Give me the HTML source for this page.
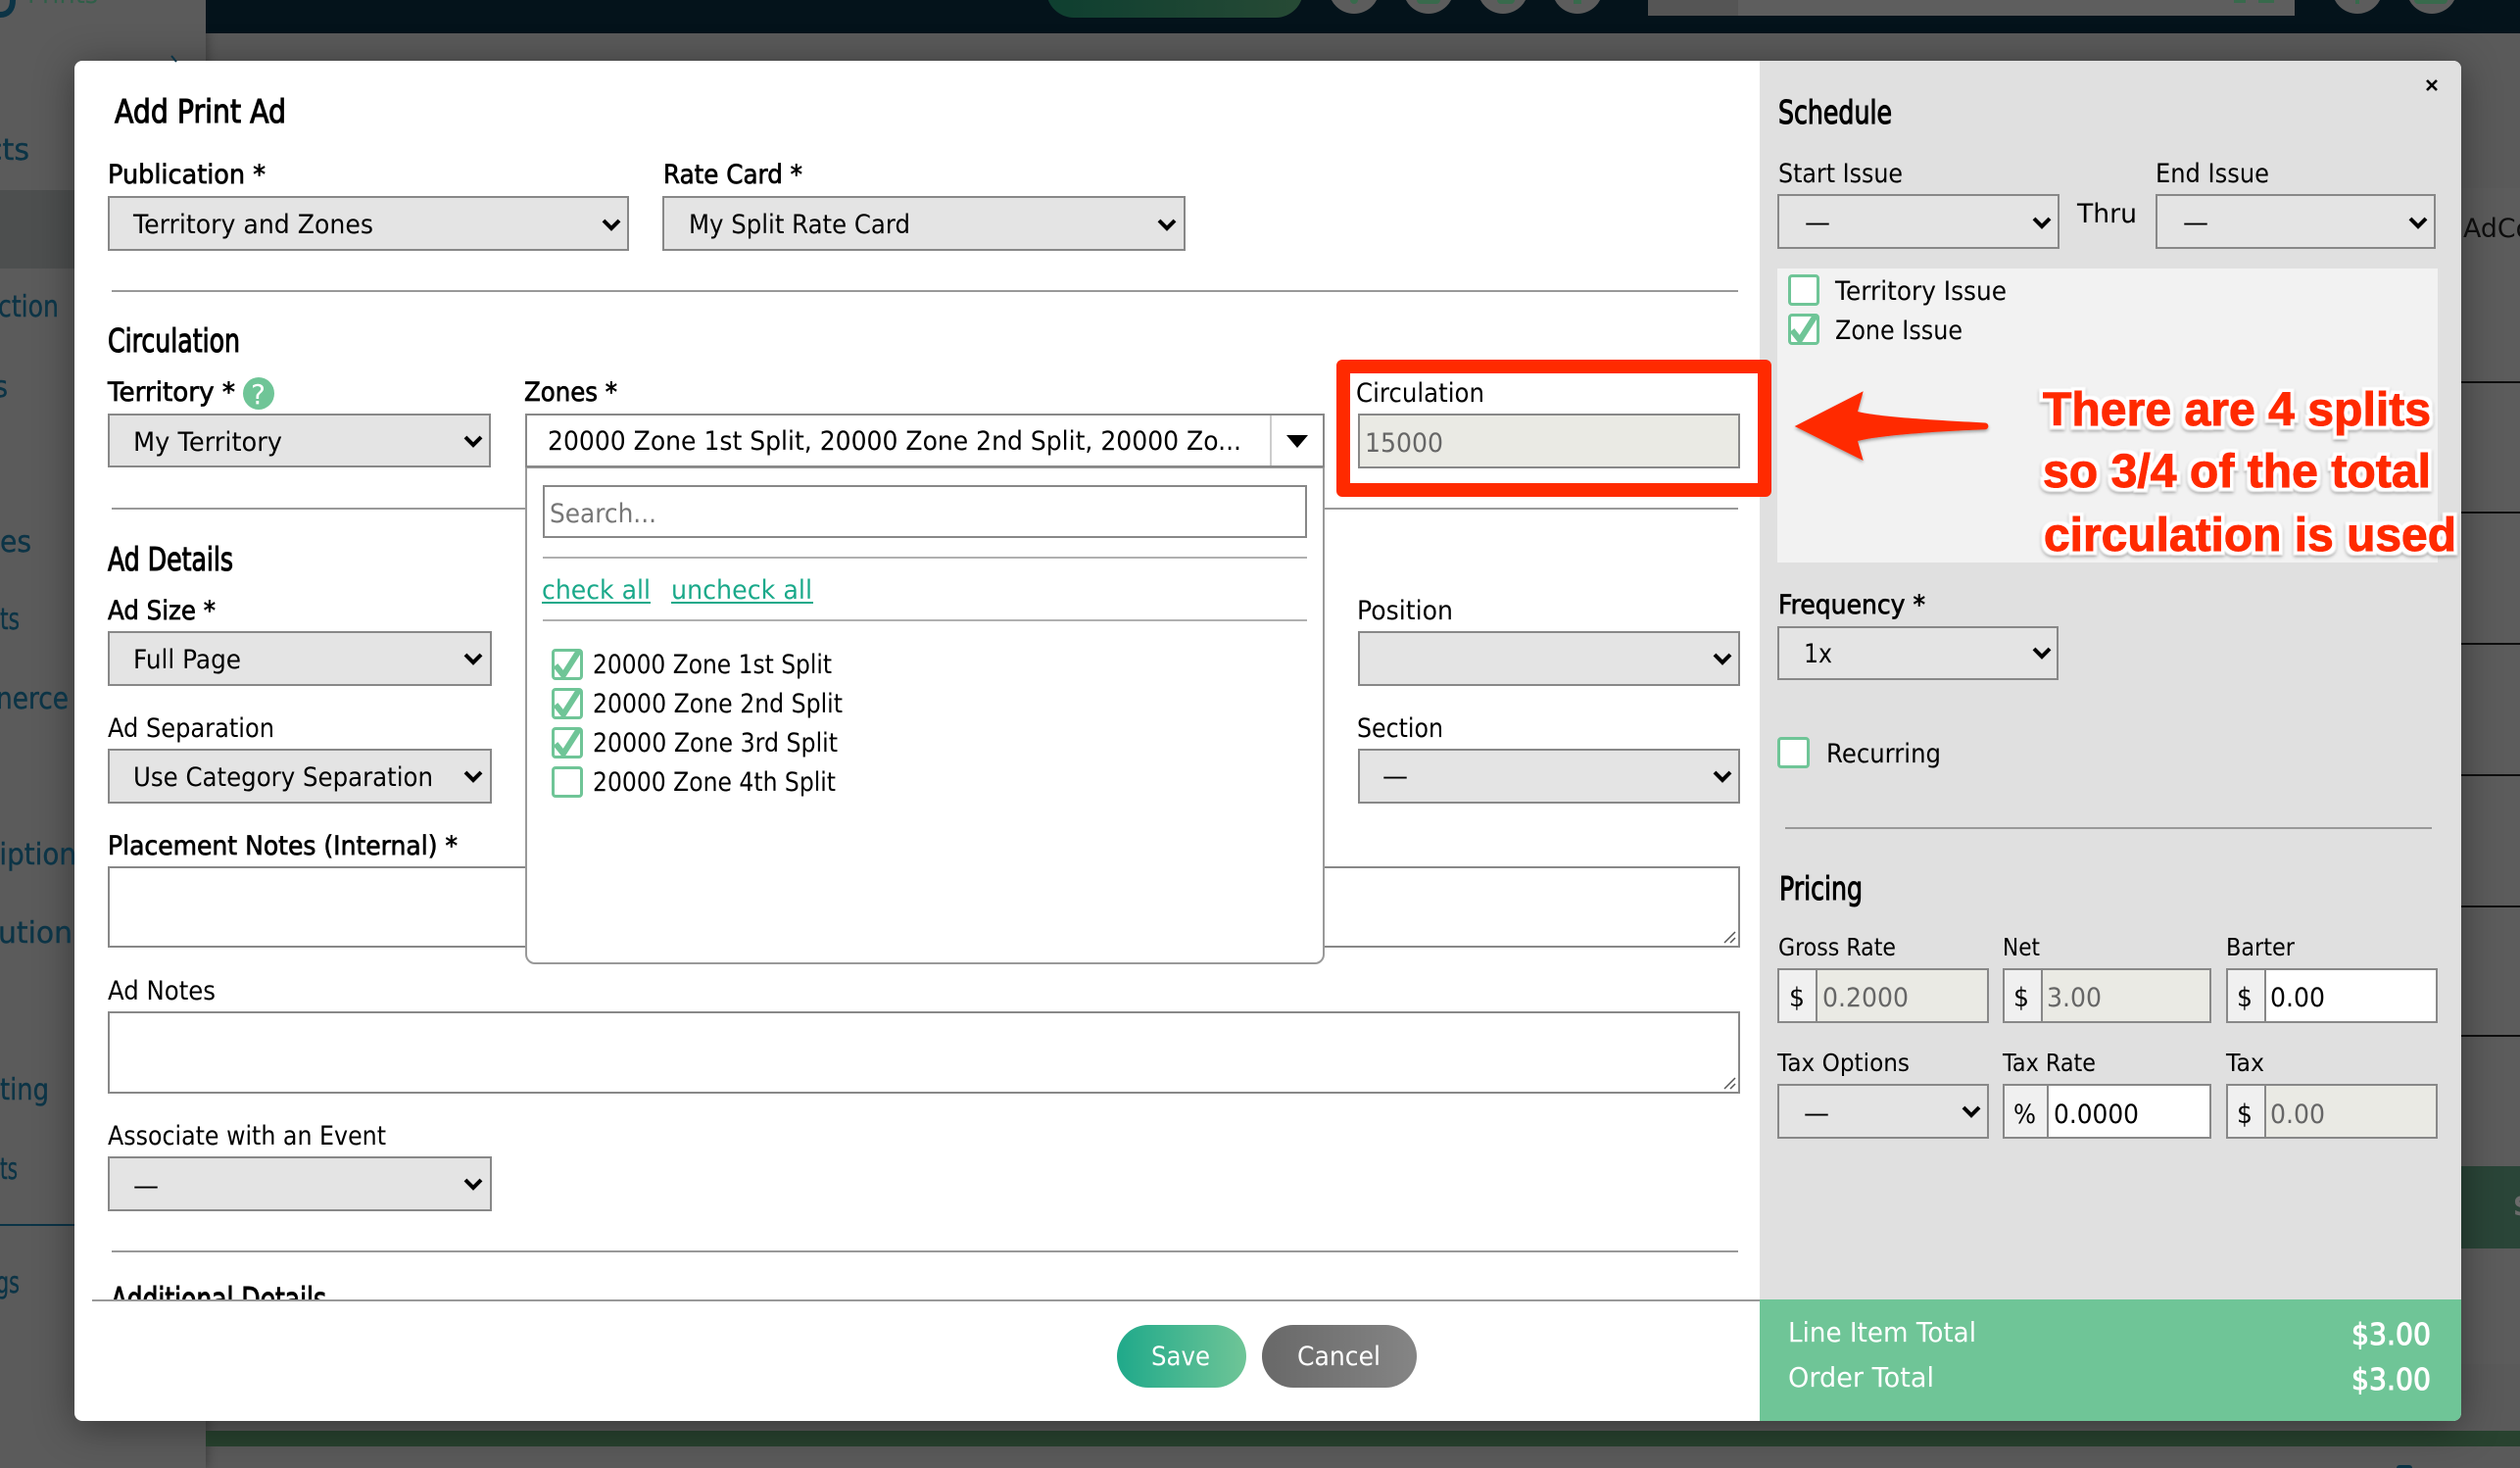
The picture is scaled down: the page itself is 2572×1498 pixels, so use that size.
<!DOCTYPE html>
<html lang="en"><head><meta charset="utf-8"><title>Add Print Ad</title>
<style>
html,body{margin:0;padding:0;width:2572px;height:1498px;overflow:hidden;background:#5a5a5a}
body{position:relative;contain:paint}
.a{position:absolute;box-sizing:border-box}
.sel{position:absolute;box-sizing:border-box;border:2px solid #888;background:#e4e4e4}
.ta{position:absolute;box-sizing:border-box;border:2px solid #888;background:#fff}
.hr{position:absolute;height:2px;background:#999}
.cb{position:absolute;box-sizing:border-box;width:32px;height:32px;border:3px solid #6fc597;border-radius:4px;background:#fff}
.ig{position:absolute;box-sizing:border-box;border:2px solid #888;background:#fff}
.ig i{position:absolute;left:0;top:0;bottom:0;background:#f0f0f0;border-right:2px solid #888;box-sizing:border-box}
.dis{background:#eaeae4}
svg{position:absolute;left:0;top:0}
text{font-family:"DejaVu Sans","Liberation Sans",sans-serif;font-size:27px;fill:#000}
.b{stroke:#000;stroke-width:.7px}
.h{font-size:33px;stroke:#000;stroke-width:1.1px}
.s{font-size:25px}
.side{fill:#0c3446;font-size:30px;stroke:#0c3446;stroke-width:.4px}
.an{font-family:"Liberation Sans",Arial,sans-serif;font-weight:700;font-size:48px;fill:#ff2a00;stroke:#ff2a00;stroke-width:1.1px;filter:url(#halo)}
</style></head>
<body>
<!-- background app -->
<div class="a" style="left:0;top:0;width:210px;height:1498px;background:#5b5b5b;box-shadow:3px 0 8px rgba(0,0,0,.25)"></div>
<div class="a" style="left:0;top:194px;width:210px;height:80px;background:#4d4f4f"></div>
<div class="a" style="left:0;top:1249px;width:80px;height:2px;background:#0c3446"></div>
<div class="a" style="left:210px;top:0;width:2362px;height:34px;background:#04131b"></div>
<div class="a" style="left:1068px;top:-30px;width:262px;height:48px;border-radius:0 0 28px 28px;background:linear-gradient(90deg,#0e3f30,#274a35)"></div>
<div class="a" style="left:1356px;top:-38px;width:52px;height:52px;border-radius:50%;background:#5c5c5c"></div>
<div class="a" style="left:1432px;top:-38px;width:52px;height:52px;border-radius:50%;background:#5c5c5c"></div>
<div class="a" style="left:1508px;top:-38px;width:52px;height:52px;border-radius:50%;background:#5c5c5c"></div>
<div class="a" style="left:1584px;top:-38px;width:52px;height:52px;border-radius:50%;background:#5c5c5c"></div>
<div class="a" style="left:1682px;top:0;width:92px;height:16px;background:#555"></div>
<div class="a" style="left:1774px;top:0;width:568px;height:16px;background:#5e5e5e"></div>
<div class="a" style="left:2380px;top:-38px;width:52px;height:52px;border-radius:50%;background:#5c5c5c"></div>
<div class="a" style="left:2456px;top:-38px;width:52px;height:52px;border-radius:50%;background:#5c5c5c"></div>
<div class="a" style="left:1378px;top:0;width:8px;height:4px;border-radius:0 0 4px 4px;background:#386a4c"></div>
<div class="a" style="left:1446px;top:0;width:24px;height:4px;border-radius:0 0 8px 8px;background:#386a4c"></div>
<div class="a" style="left:1528px;top:0;width:18px;height:4px;border-radius:0 0 8px 8px;background:#386a4c"></div>
<div class="a" style="left:1606px;top:0;width:8px;height:4px;background:#386a4c"></div>
<div class="a" style="left:2280px;top:0;width:12px;height:3px;background:#386a4c"></div>
<div class="a" style="left:2305px;top:0;width:16px;height:3px;background:#386a4c"></div>
<div class="a" style="left:2404px;top:0;width:4px;height:4px;background:#386a4c"></div>
<div class="a" style="left:2464px;top:0;width:34px;height:4px;border-radius:0 0 8px 8px;background:#386a4c"></div>
<div class="a" style="left:2512px;top:192px;width:60px;height:1200px;background:#5c5c5c"></div>
<div class="a" style="left:2512px;top:389px;width:60px;height:2px;background:#0f0f0f"></div>
<div class="a" style="left:2512px;top:522px;width:60px;height:2px;background:#0f0f0f"></div>
<div class="a" style="left:2512px;top:656px;width:60px;height:2px;background:#0f0f0f"></div>
<div class="a" style="left:2512px;top:790px;width:60px;height:2px;background:#0f0f0f"></div>
<div class="a" style="left:2512px;top:924px;width:60px;height:2px;background:#0f0f0f"></div>
<div class="a" style="left:2512px;top:1056px;width:60px;height:2px;background:#0f0f0f"></div>
<div class="a" style="left:2512px;top:1190px;width:60px;height:84px;background:#2a4538"></div>
<div class="a" style="left:210px;top:1460px;width:2362px;height:16px;background:#28422f"></div>
<div class="a" style="left:2446px;top:1495px;width:16px;height:3px;border-radius:8px 8px 0 0;background:#0c3446"></div>

<!-- modal -->
<div class="a" style="left:76px;top:62px;width:2436px;height:1388px;border-radius:8px;background:#fff;box-shadow:0 6px 40px rgba(0,0,0,.4)"></div>
<div class="a" style="left:1796px;top:62px;width:716px;height:1265px;background:#e0e0e0;border-radius:0 8px 0 0"></div>
<div class="a" style="left:1796px;top:1326px;width:716px;height:124px;background:#6fc597;border-radius:0 0 8px 0"></div>

<div class="hr" style="left:114px;top:296px;width:1660px"></div>
<div class="hr" style="left:114px;top:518px;width:1660px"></div>
<div class="hr" style="left:114px;top:1276px;width:1660px"></div>
<div class="hr" style="left:94px;top:1326px;width:1702px"></div>

<div class="sel" style="left:110px;top:200px;width:532px;height:56px"></div>
<div class="sel" style="left:676px;top:200px;width:534px;height:56px"></div>
<div class="sel" style="left:110px;top:422px;width:391px;height:55px"></div>
<div class="sel" style="left:110px;top:644px;width:392px;height:56px"></div>
<div class="sel" style="left:110px;top:764px;width:392px;height:56px"></div>
<div class="sel" style="left:110px;top:1180px;width:392px;height:56px"></div>
<div class="sel" style="left:1386px;top:644px;width:390px;height:56px"></div>
<div class="sel" style="left:1386px;top:764px;width:390px;height:56px"></div>
<div class="ta" style="left:110px;top:884px;width:1666px;height:83px"></div>
<div class="ta" style="left:110px;top:1032px;width:1666px;height:84px"></div>

<!-- dropdown -->
<div class="a" style="left:536px;top:476px;width:816px;height:508px;background:#fff;border:2px solid #999;border-radius:0 0 10px 10px"></div>
<div class="a" style="left:536px;top:422px;width:816px;height:55px;background:#fff;border:2px solid #888"></div>
<div class="a" style="left:1296px;top:424px;width:2px;height:51px;background:#ccc"></div>
<div class="a" style="left:554px;top:495px;width:780px;height:54px;background:#fff;border:2px solid #888"></div>
<div class="a" style="left:554px;top:568px;width:780px;height:2px;background:#b0b0b0"></div>
<div class="a" style="left:554px;top:632px;width:780px;height:2px;background:#b0b0b0"></div>
<div class="a" style="left:553px;top:614px;width:111px;height:2px;background:#1aa98a"></div>
<div class="a" style="left:685px;top:614px;width:145px;height:2px;background:#1aa98a"></div>
<div class="cb" style="left:563px;top:662px"></div>
<div class="cb" style="left:563px;top:702px"></div>
<div class="cb" style="left:563px;top:742px"></div>
<div class="cb" style="left:563px;top:782px"></div>

<!-- red highlight -->
<div class="a" style="left:1364px;top:367px;width:444px;height:140px;background:#fff;border:14px solid #ff2a00;border-radius:6px"></div>
<div class="a dis" style="left:1386px;top:422px;width:390px;height:56px;border:2px solid #888"></div>

<!-- right panel -->
<div class="sel" style="left:1814px;top:198px;width:288px;height:56px"></div>
<div class="sel" style="left:2200px;top:198px;width:286px;height:56px"></div>
<div class="a" style="left:1814px;top:274px;width:674px;height:300px;background:#f2f2f2"></div>
<div class="cb" style="left:1825px;top:280px"></div>
<div class="cb" style="left:1825px;top:320px"></div>
<div class="sel" style="left:1814px;top:639px;width:287px;height:55px"></div>
<div class="cb" style="left:1814px;top:752px;width:33px"></div>
<div class="a" style="left:1822px;top:844px;width:660px;height:2px;background:#999"></div>
<div class="ig dis" style="left:1814px;top:988px;width:216px;height:56px"><i style="width:39px"></i></div>
<div class="ig dis" style="left:2044px;top:988px;width:213px;height:56px"><i style="width:39px"></i></div>
<div class="ig" style="left:2272px;top:988px;width:216px;height:56px"><i style="width:39px"></i></div>
<div class="sel" style="left:1814px;top:1106px;width:216px;height:56px"></div>
<div class="ig" style="left:2044px;top:1106px;width:213px;height:56px"><i style="width:45px"></i></div>
<div class="ig dis" style="left:2272px;top:1106px;width:216px;height:56px"><i style="width:39px"></i></div>
<div class="a" style="left:1140px;top:1352px;width:132px;height:64px;border-radius:32px;background:linear-gradient(90deg,#1fa98a,#6fc597)"></div>
<div class="a" style="left:1288px;top:1352px;width:158px;height:64px;border-radius:32px;background:linear-gradient(90deg,#686868,#858585)"></div>
<div class="a" style="left:248px;top:385px;width:32px;height:33px;border-radius:50%;background:#6fc597"></div>

<svg width="2572" height="1498" viewBox="0 0 2572 1498" xmlns="http://www.w3.org/2000/svg">
<defs>
<filter id="ds" x="-5%" y="-20%" width="110%" height="150%"><feDropShadow dx="0" dy="2" stdDeviation="1.5" flood-color="#000" flood-opacity=".35"/></filter>
<filter id="halo" x="-5%" y="-30%" width="110%" height="170%">
<feMorphology in="SourceAlpha" operator="dilate" radius="3.5" result="d"/>
<feGaussianBlur in="d" stdDeviation=".6" result="db"/>
<feFlood flood-color="#fff"/><feComposite in2="db" operator="in" result="w"/>
<feGaussianBlur in="db" stdDeviation="1.5" result="sb"/>
<feOffset in="sb" dy="2" result="so"/>
<feFlood flood-color="#000" flood-opacity=".35"/><feComposite in2="so" operator="in" result="sh"/>
<feMerge><feMergeNode in="sh"/><feMergeNode in="w"/><feMergeNode in="SourceGraphic"/></feMerge>
</filter>
<clipPath id="clipAdd"><rect x="94" y="1290" width="1000" height="36"/></clipPath>
</defs>

<!-- background texts -->
<path d="M0 15 C8 15 13 10 13 0" fill="none" stroke="#0c3446" stroke-width="6"/>
<text x="28" y="3" style="fill:#2f5f48" textLength="72" lengthAdjust="spacingAndGlyphs">Prints</text>
<path d="M175 57 L180 63" stroke="#0c3446" stroke-width="2" fill="none"/>
<text class="side" x="-14" y="163" textLength="44" lengthAdjust="spacingAndGlyphs">cts</text>
<text class="side" x="-2" y="323" textLength="62" lengthAdjust="spacingAndGlyphs">ction</text>
<text class="side" x="-6" y="405" textLength="14" lengthAdjust="spacingAndGlyphs">s</text>
<text class="side" x="0" y="563" textLength="32" lengthAdjust="spacingAndGlyphs">es</text>
<text class="side" x="0" y="642" textLength="20" lengthAdjust="spacingAndGlyphs">ts</text>
<text class="side" x="-4" y="723" textLength="74" lengthAdjust="spacingAndGlyphs">nerce</text>
<text class="side" x="-12" y="882" textLength="90" lengthAdjust="spacingAndGlyphs">ription</text>
<text class="side" x="-2" y="962" textLength="76" lengthAdjust="spacingAndGlyphs">ution</text>
<text class="side" x="0" y="1122" textLength="50" lengthAdjust="spacingAndGlyphs">ting</text>
<text class="side" x="0" y="1203" textLength="18" lengthAdjust="spacingAndGlyphs">ts</text>
<text class="side" x="-4" y="1319" textLength="24" lengthAdjust="spacingAndGlyphs">gs</text>
<text x="2514" y="242" style="fill:#0d0d0d" textLength="70" lengthAdjust="spacingAndGlyphs">AdCo</text>
<text x="2565" y="1240" style="fill:#6b6b6b;font-weight:700">S</text>

<!-- left column -->
<text class="h" x="117" y="125" textLength="175" lengthAdjust="spacingAndGlyphs">Add Print Ad</text>
<text class="b" x="110" y="187" textLength="161" lengthAdjust="spacingAndGlyphs">Publication *</text>
<text class="b" x="677" y="187" textLength="142" lengthAdjust="spacingAndGlyphs">Rate Card *</text>
<text x="136" y="238" textLength="245" lengthAdjust="spacingAndGlyphs">Territory and Zones</text>
<text x="703" y="238" textLength="226" lengthAdjust="spacingAndGlyphs">My Split Rate Card</text>
<text class="h" x="110" y="359" textLength="135" lengthAdjust="spacingAndGlyphs">Circulation</text>
<text class="b" x="110" y="409" textLength="130" lengthAdjust="spacingAndGlyphs">Territory *</text>
<text x="256" y="412" style="font-size:28px;fill:#fff" textLength="15" lengthAdjust="spacingAndGlyphs">?</text>
<text class="b" x="535" y="409" textLength="95" lengthAdjust="spacingAndGlyphs">Zones *</text>
<text x="136" y="460" textLength="152" lengthAdjust="spacingAndGlyphs">My Territory</text>
<text x="559" y="459" textLength="708" lengthAdjust="spacingAndGlyphs">20000 Zone 1st Split, 20000 Zone 2nd Split, 20000 Zo...</text>
<path d="M1313 444 L1335 444 L1324 457 Z" fill="#000"/>
<text x="561" y="533" style="fill:#777" textLength="109" lengthAdjust="spacingAndGlyphs">Search...</text>
<text x="553" y="611" style="fill:#1aa98a" textLength="111" lengthAdjust="spacingAndGlyphs">check all</text>
<text x="685" y="611" style="fill:#1aa98a" textLength="144" lengthAdjust="spacingAndGlyphs">uncheck all</text>
<g fill="none" stroke="#6fc597" stroke-width="6">
<path d="M567 679 L575 689 L591 664"/>
<path d="M567 719 L575 729 L591 704"/>
<path d="M567 759 L575 769 L591 744"/>
<path d="M1829 337 L1837 347 L1853 322"/>
</g>
<text x="605" y="687" textLength="244" lengthAdjust="spacingAndGlyphs">20000 Zone 1st Split</text>
<text x="605" y="727" textLength="255" lengthAdjust="spacingAndGlyphs">20000 Zone 2nd Split</text>
<text x="605" y="767" textLength="250" lengthAdjust="spacingAndGlyphs">20000 Zone 3rd Split</text>
<text x="605" y="807" textLength="248" lengthAdjust="spacingAndGlyphs">20000 Zone 4th Split</text>
<text class="h" x="110" y="582" textLength="128" lengthAdjust="spacingAndGlyphs">Ad Details</text>
<text class="b" x="110" y="632" textLength="110" lengthAdjust="spacingAndGlyphs">Ad Size *</text>
<text x="136" y="682" textLength="110" lengthAdjust="spacingAndGlyphs">Full Page</text>
<text x="110" y="752" textLength="170" lengthAdjust="spacingAndGlyphs">Ad Separation</text>
<text x="136" y="802" textLength="306" lengthAdjust="spacingAndGlyphs">Use Category Separation</text>
<text class="b" x="110" y="872" textLength="357" lengthAdjust="spacingAndGlyphs">Placement Notes (Internal) *</text>
<text x="110" y="1020" textLength="110" lengthAdjust="spacingAndGlyphs">Ad Notes</text>
<text x="110" y="1168" textLength="284" lengthAdjust="spacingAndGlyphs">Associate with an Event</text>
<text x="136" y="1219" textLength="26" lengthAdjust="spacingAndGlyphs">—</text>
<g clip-path="url(#clipAdd)"><text class="h" x="113" y="1337" textLength="220" lengthAdjust="spacingAndGlyphs">Additional Details</text></g>
<text x="1385" y="632" textLength="98" lengthAdjust="spacingAndGlyphs">Position</text>
<text x="1385" y="752" textLength="88" lengthAdjust="spacingAndGlyphs">Section</text>
<text x="1411" y="801" textLength="26" lengthAdjust="spacingAndGlyphs">—</text>
<text x="1384" y="410" textLength="131" lengthAdjust="spacingAndGlyphs">Circulation</text>
<text x="1393" y="461" style="fill:#666" textLength="80" lengthAdjust="spacingAndGlyphs">15000</text>
<text x="1175" y="1393" style="fill:#fff" textLength="60" lengthAdjust="spacingAndGlyphs">Save</text>
<text x="1324" y="1393" style="fill:#fff" textLength="85" lengthAdjust="spacingAndGlyphs">Cancel</text>

<!-- chevrons -->
<g fill="none" stroke="#000" stroke-width="4">
<path d="M616 225 L624 233 L632 225"/>
<path d="M1183 225 L1191 233 L1199 225"/>
<path d="M475 446 L483 454 L491 446"/>
<path d="M475 668 L483 676 L491 668"/>
<path d="M475 788 L483 796 L491 788"/>
<path d="M475 1204 L483 1212 L491 1204"/>
<path d="M1750 668 L1758 676 L1766 668"/>
<path d="M1750 788 L1758 796 L1766 788"/>
<path d="M2076 223 L2084 231 L2092 223"/>
<path d="M2460 223 L2468 231 L2476 223"/>
<path d="M2076 662 L2084 670 L2092 662"/>
<path d="M2004 1130 L2012 1138 L2020 1130"/>
</g>
<!-- textarea grips -->
<g stroke="#555" stroke-width="1.5" fill="none">
<path d="M1760 962 L1771 951 M1766 962 L1771 957"/>
<path d="M1760 1111 L1771 1100 M1766 1111 L1771 1106"/>
</g>

<!-- right column -->
<path d="M2477 82 L2487 92 M2487 82 L2477 92" stroke="#000" stroke-width="2.6" fill="none"/>
<text class="h" x="1815" y="126" textLength="116" lengthAdjust="spacingAndGlyphs">Schedule</text>
<text x="1815" y="186" textLength="127" lengthAdjust="spacingAndGlyphs">Start Issue</text>
<text x="2200" y="186" textLength="116" lengthAdjust="spacingAndGlyphs">End Issue</text>
<text x="1842" y="236" textLength="26" lengthAdjust="spacingAndGlyphs">—</text>
<text x="2120" y="227" textLength="61" lengthAdjust="spacingAndGlyphs">Thru</text>
<text x="2228" y="236" textLength="26" lengthAdjust="spacingAndGlyphs">—</text>
<text x="1873" y="306" textLength="175" lengthAdjust="spacingAndGlyphs">Territory Issue</text>
<text x="1873" y="346" textLength="130" lengthAdjust="spacingAndGlyphs">Zone Issue</text>
<text class="b" x="1815" y="626" textLength="150" lengthAdjust="spacingAndGlyphs">Frequency *</text>
<text x="1841" y="676" textLength="29" lengthAdjust="spacingAndGlyphs">1x</text>
<text x="1864" y="778" textLength="117" lengthAdjust="spacingAndGlyphs">Recurring</text>
<text class="h" x="1816" y="918" textLength="85" lengthAdjust="spacingAndGlyphs">Pricing</text>
<text class="s" x="1815" y="975" textLength="120" lengthAdjust="spacingAndGlyphs">Gross Rate</text>
<text class="s" x="2044" y="975" textLength="38" lengthAdjust="spacingAndGlyphs">Net</text>
<text class="s" x="2272" y="975" textLength="70" lengthAdjust="spacingAndGlyphs">Barter</text>
<text x="1826" y="1027" textLength="16" lengthAdjust="spacingAndGlyphs">$</text>
<text x="1860" y="1027" style="fill:#666" textLength="88" lengthAdjust="spacingAndGlyphs">0.2000</text>
<text x="2055" y="1027" textLength="16" lengthAdjust="spacingAndGlyphs">$</text>
<text x="2089" y="1027" style="fill:#666" textLength="56" lengthAdjust="spacingAndGlyphs">3.00</text>
<text x="2283" y="1027" textLength="16" lengthAdjust="spacingAndGlyphs">$</text>
<text x="2317" y="1027" textLength="56" lengthAdjust="spacingAndGlyphs">0.00</text>
<text class="s" x="1814" y="1093" textLength="135" lengthAdjust="spacingAndGlyphs">Tax Options</text>
<text class="s" x="2044" y="1093" textLength="95" lengthAdjust="spacingAndGlyphs">Tax Rate</text>
<text class="s" x="2272" y="1093" textLength="39" lengthAdjust="spacingAndGlyphs">Tax</text>
<text x="1841" y="1145" textLength="26" lengthAdjust="spacingAndGlyphs">—</text>
<text x="2055" y="1146" textLength="23" lengthAdjust="spacingAndGlyphs">%</text>
<text x="2096" y="1146" textLength="87" lengthAdjust="spacingAndGlyphs">0.0000</text>
<text x="2283" y="1146" textLength="16" lengthAdjust="spacingAndGlyphs">$</text>
<text x="2317" y="1146" style="fill:#666" textLength="56" lengthAdjust="spacingAndGlyphs">0.00</text>
<text x="1825" y="1369" style="fill:#fff;font-size:28px" textLength="192" lengthAdjust="spacingAndGlyphs">Line Item Total</text>
<text x="1825" y="1415" style="fill:#fff;font-size:28px" textLength="149" lengthAdjust="spacingAndGlyphs">Order Total</text>
<text x="2400" y="1372" style="fill:#fff;stroke:#fff;stroke-width:1px;font-size:30px" textLength="81" lengthAdjust="spacingAndGlyphs">$3.00</text>
<text x="2400" y="1418" style="fill:#fff;stroke:#fff;stroke-width:1px;font-size:30px" textLength="81" lengthAdjust="spacingAndGlyphs">$3.00</text>

<!-- annotation -->
<path d="M1831.7 435 L1901.7 399.3 L1896 420 C1920 426 1980 429 2026 431.5 a3.4 3.4 0 0 1 0 6.8 C1980 440 1920 444 1896 450 L1901.7 470 Z" fill="#ff2a00" filter="url(#ds)"/>
<text class="an" x="2085" y="434" textLength="396" lengthAdjust="spacingAndGlyphs">There are 4 splits</text>
<text class="an" x="2085" y="497" textLength="396" lengthAdjust="spacingAndGlyphs">so 3/4 of the total</text>
<text class="an" x="2086" y="562" textLength="421" lengthAdjust="spacingAndGlyphs">circulation is used</text>
</svg>
</body></html>
